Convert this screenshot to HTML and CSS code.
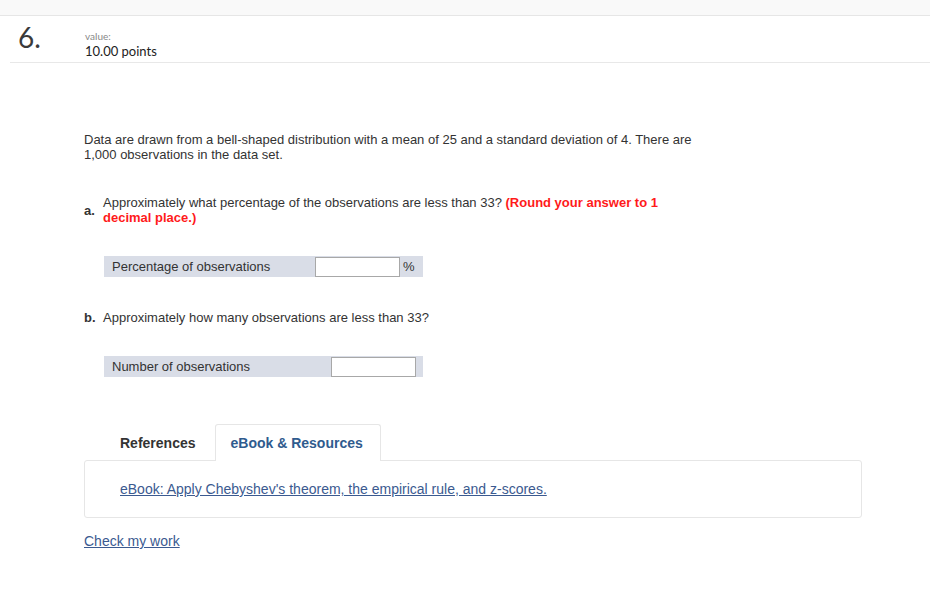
FILE: index.html
```html
<!DOCTYPE html>
<html>
<head>
<meta charset="utf-8">
<link rel="stylesheet" href="styles.css">
</head>
<body>
<div class="page">
  <div class="topbar"></div>
  <div class="header">
    <div class="qnum">6.</div>
    <div class="meta">
      <div class="value-label">value:</div>
      <div class="points">10.00 points</div>
    </div>
  </div>
  <div class="content">
    <p class="intro">Data are drawn from a bell-shaped distribution with a mean of 25 and a standard deviation of 4. There are 1,000 observations in the data set.</p>

    <div class="part part-a">
      <div class="part-label">a.</div>
      <div class="part-text">Approximately what percentage of the observations are less than 33? <span class="hint">(Round your answer to 1 decimal place.)</span></div>
    </div>

    <div class="answer-row row-a">
      <div class="answer-label">Percentage of observations</div>
      <input class="answer-input" type="text">
      <div class="unit">%</div>
    </div>

    <div class="part part-b">
      <div class="part-label">b.</div>
      <div class="part-text">Approximately how many observations are less than 33?</div>
    </div>

    <div class="answer-row row-b">
      <div class="answer-label">Number of observations</div>
      <input class="answer-input" type="text">
    </div>

    <div class="tabs">
      <div class="tab">References</div>
      <div class="tab tab-active">eBook &amp; Resources</div>
    </div>
    <div class="panel">
      <a class="link" href="#">eBook: Apply Chebyshev's theorem, the empirical rule, and z-scores.</a>
    </div>

    <div class="check"><a class="link" href="#">Check my work</a></div>
  </div>
</div>
</body>
</html>
```

FILE: styles.css
```css
html, body {
  margin: 0;
  padding: 0;
  background: #ffffff;
}

body {
  font-family: "Liberation Sans", Arial, sans-serif;
  font-size: 13px;
  color: #333333;
}

.page {
  margin-right: 1px;
}

.topbar {
  height: 15px;
  background: #f9f9f9;
  border-bottom: 1px solid #e6e6e6;
}

.header {
  margin-left: 10px;
  height: 46px;
  border-bottom: 1px solid #e8e8e8;
  display: flex;
  font-family: Lato, "Open Sans", sans-serif;
}

.qnum {
  width: 67px;
  padding-left: 8px;
  margin-top: 7px;
  font-size: 28px;
  font-weight: 400;
  line-height: 28px;
  color: #3a3a3a;
}

.meta {
  padding-top: 13px;
}

.value-label {
  font-size: 10px;
  line-height: 14px;
  color: #888888;
}

.points {
  font-size: 13px;
  line-height: 16px;
  color: #222222;
}

.content {
  margin-left: 84px;
}

.intro {
  width: 620px;
  margin: 69px 0 0 0;
  line-height: 15px;
}

.part {
  display: flex;
  align-items: center;
  line-height: 15px;
}

.part-a {
  margin-top: 33px;
  width: 589px;
}

.part-b {
  margin-top: 33px;
}

.part-label {
  width: 19px;
  flex: none;
  font-weight: bold;
}

.hint {
  color: #ff1a1a;
  font-weight: bold;
}

.answer-row {
  margin-left: 20px;
  width: 319px;
  height: 21px;
  background: #d9dde7;
  display: flex;
  align-items: center;
  line-height: 15px;
}

.row-a {
  margin-top: 31px;
}

.row-b {
  margin-top: 31px;
}

.answer-label {
  padding-left: 8px;
}

.row-a .answer-label {
  width: 203px;
}

.row-b .answer-label {
  width: 219px;
}

.answer-input {
  box-sizing: border-box;
  width: 85px;
  height: 20px;
  margin: 0;
  padding: 0 3px;
  border: 1px solid #a8a8a8;
  background: #ffffff;
  font-family: inherit;
  font-size: 13px;
}

.unit {
  padding-left: 3px;
}

.tabs {
  margin-top: 47px;
  padding-left: 20px;
  display: flex;
  position: relative;
  z-index: 1;
}

.tab {
  padding: 8px 15px 8px;
  margin-right: 3px;
  margin-bottom: -1px;
  border: 1px solid transparent;
  border-bottom: 0;
  border-radius: 3px 3px 0 0;
  font-size: 14px;
  font-weight: bold;
  line-height: 20px;
  color: #333333;
}

.tab-active {
  padding-right: 17px;
  border-color: #e6e6e6;
  background: #ffffff;
  color: #2f5b8e;
}

.panel {
  box-sizing: border-box;
  width: 778px;
  padding: 20px 35px;
  border: 1px solid #e6e6e6;
  border-radius: 3px;
  font-size: 14px;
  line-height: 16px;
}

.link {
  color: #3b5a90;
  text-decoration: underline;
}

.check {
  margin-top: 15px;
  font-size: 14px;
  line-height: 16px;
}
```
